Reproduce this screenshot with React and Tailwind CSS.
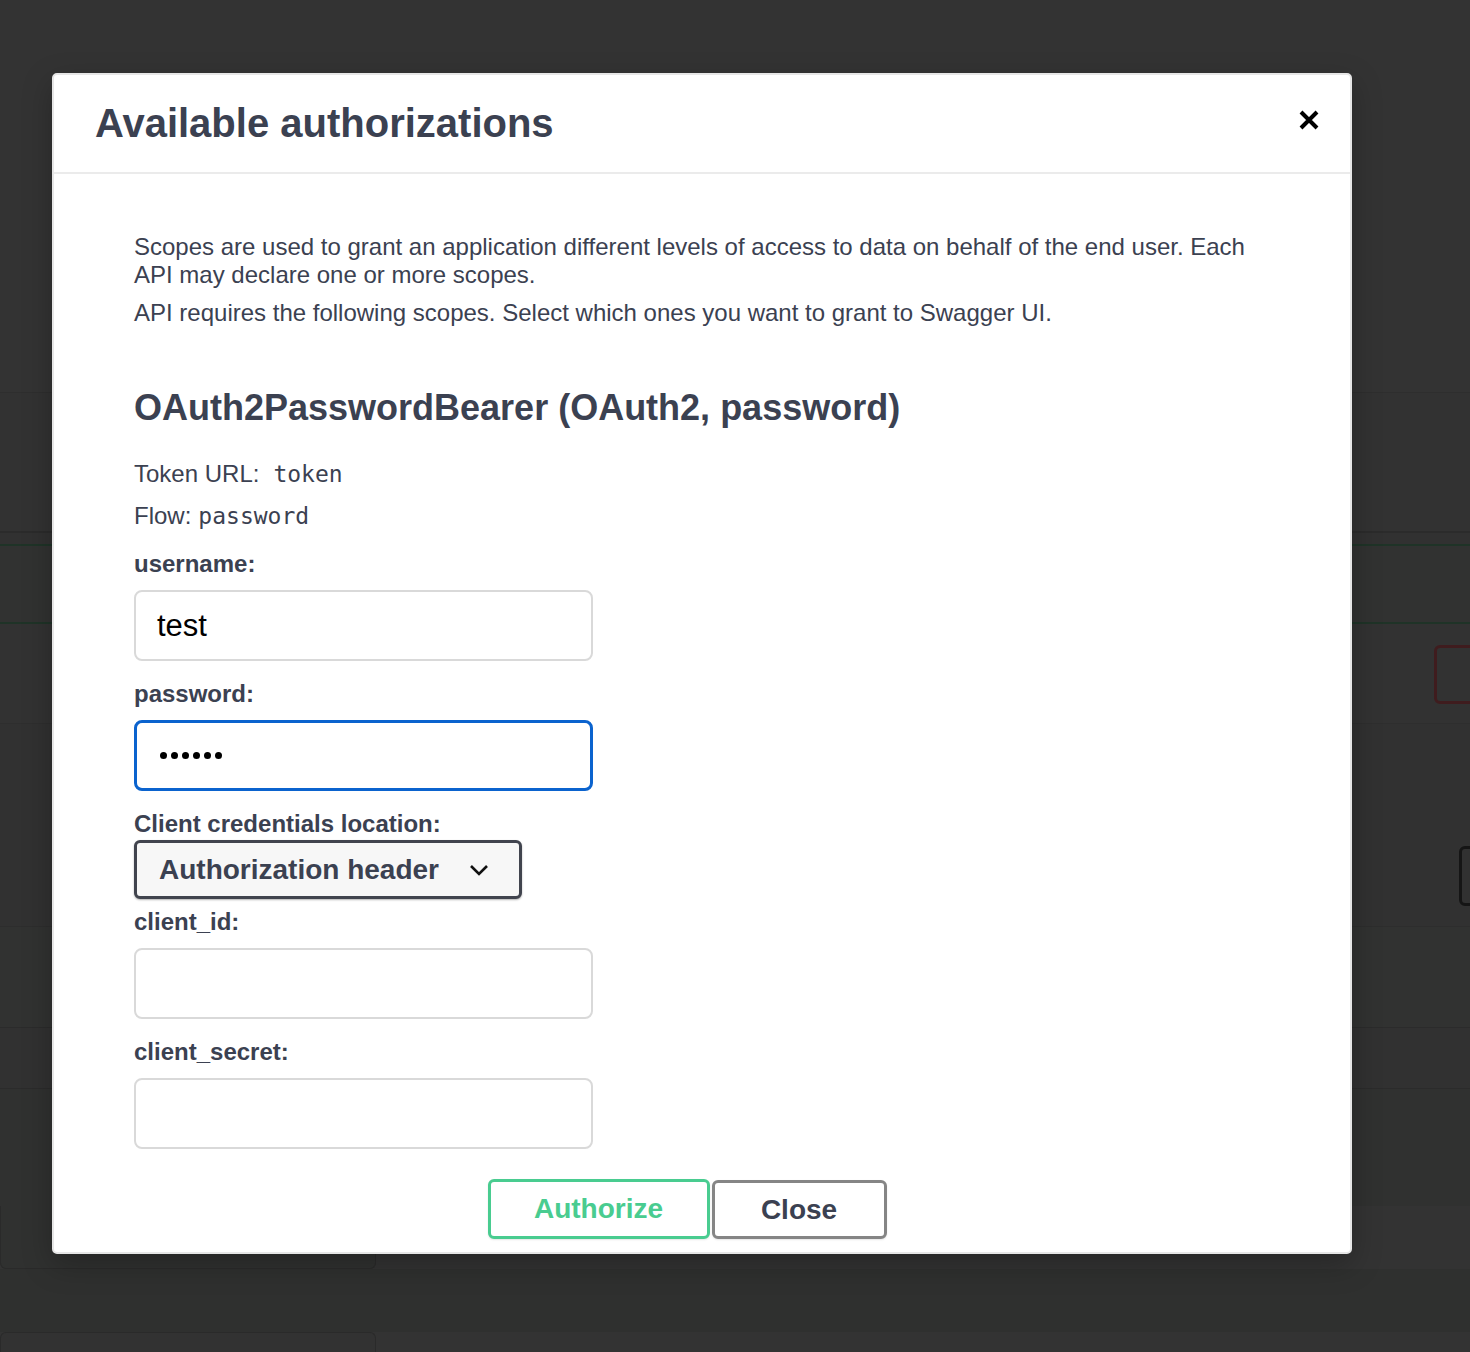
import React from "react";

function Label({ children, className = "" }) {
  return (
    <div className={"text-[24px] leading-[28px] font-bold text-[#3b4151] " + className}>
      {children}
    </div>
  );
}

function TextBox({ children, focused = false, className = "" }) {
  return (
    <div
      className={
        "w-[459px] h-[71px] rounded-[8px] bg-white flex items-center pl-[21px] " +
        (focused ? "border-[3px] border-[#0b63ce] pl-[20px] " : "border-2 border-[#d9d9d9] ") +
        className
      }
    >
      {children}
    </div>
  );
}

export default function App() {
  return (
    <div className="relative w-[1470px] h-[1352px] overflow-hidden bg-[#333333] font-['Liberation_Sans',Arial,sans-serif]">
      {/* dimmed page behind the modal */}
      <div className="flex flex-col w-full">
        <div className="h-[392px] bg-[#333333]" />
        <div className="h-[139px] border-t border-[#2e2e2e] bg-[#323232]" />
        <div className="h-[13px] border-t-2 border-[#2b2b2b] bg-[#313131]" />
        <div className="h-[78px] border-t-2 border-[#1f3327] bg-[#313231]" />
        <div className="relative h-[101px] border-t-2 border-[#1f3327] bg-[#323232]">
          <div className="absolute left-[1434px] top-[21px] w-[60px] h-[59px] rounded-[6px] border-[3px] border-[#3f1c1e]" />
        </div>
        <div className="relative h-[203px] border-t border-[#2e2e2e] bg-[#313131]">
          <div className="absolute left-[1459px] top-[122px] w-[40px] h-[60px] rounded-[6px] border-[3px] border-[#151515]" />
        </div>
        <div className="h-[101px] border-t border-[#2d2d2d] bg-[#313231]" />
        <div className="h-[61px] border-t border-[#2b2b2b] bg-[#313131]" />
        <div className="h-[118px] border-t border-[#2b2b2b] bg-[#303130]" />
        <div className="h-[63px] w-[376px] border border-t-0 border-[#2a2a2a] rounded-b-[6px] bg-[#303130]" />
        <div className="h-[63px] bg-[#2f302f]" />
        <div className="h-[40px] w-[376px] border border-b-0 border-[#2a2a2a] rounded-t-[6px] bg-[#323232]" />
      </div>

      {/* modal */}
      <div className="absolute left-[52px] top-[73px] w-[1300px] h-[1181px] bg-white rounded-[5px] border-2 border-[#e6e6e6] shadow-[0_10px_30px_rgba(0,0,0,0.25)] flex flex-col">
        <div className="h-[99px] shrink-0 border-b-2 border-[#ebebeb] flex items-center justify-between pl-[41px] pr-[30px]">
          <h3 className="text-[40px] leading-[48px] font-bold text-[#3b4151] -mt-[2px]">
            Available authorizations
          </h3>
          <svg width="22" height="22" viewBox="0 0 22 22" className="-mt-[8px]">
            <path d="M3 3 L19 19 M19 3 L3 19" stroke="#000" strokeWidth="4" strokeLinecap="butt" />
          </svg>
        </div>

        <div className="flex flex-col pl-[80px] pr-[81px] pt-[59px] text-[#3b4151]">
          <p className="text-[24px] leading-[28px]">
            Scopes are used to grant an application different levels of access to data on behalf of the end user. Each API may declare one or more scopes.
          </p>
          <p className="text-[24px] leading-[28px] mt-[10px]">
            API requires the following scopes. Select which ones you want to grant to Swagger UI.
          </p>

          <h4 className="text-[36px] leading-[43px] font-bold mt-[59px]">
            OAuth2PasswordBearer (OAuth2, password)
          </h4>

          <p className="text-[24px] leading-[28px] mt-[31px]">
            Token URL:
            <span className="ml-[14px] font-['DejaVu_Sans_Mono','Liberation_Mono',monospace] text-[23px]">token</span>
          </p>
          <p className="text-[24px] leading-[28px] mt-[14px]">
            Flow:
            <span className="ml-[7px] font-['DejaVu_Sans_Mono','Liberation_Mono',monospace] text-[23px]">password</span>
          </p>

          <Label className="mt-[20px]">username:</Label>
          <TextBox className="mt-[12px]">
            <span className="text-[31px] leading-[36px] text-black">test</span>
          </TextBox>

          <Label className="mt-[19px]">password:</Label>
          <TextBox focused className="mt-[12px] h-[70px]">
            <div className="flex items-center gap-[4px] ml-[2px]">
              {[0, 1, 2, 3, 4, 5].map((i) => (
                <span key={i} className="block w-[7px] h-[7px] rounded-full bg-black" />
              ))}
            </div>
          </TextBox>

          <Label className="mt-[19px]">Client credentials location:</Label>
          <div className="mt-[2px] w-[388px] h-[59px] rounded-[6px] border-[3px] border-[#41444e] bg-[#f7f7f7] shadow-[0_1px_2px_rgba(0,0,0,0.3)] flex items-center justify-between pl-[22px] pr-[30px]">
            <span className="text-[28px] leading-[32px] font-bold text-[#3b4151]">Authorization header</span>
            <svg width="20" height="12" viewBox="0 0 20 12">
              <path d="M2 2 L10 10 L18 2" fill="none" stroke="#111" strokeWidth="2.6" />
            </svg>
          </div>

          <Label className="mt-[9px]">client_id:</Label>
          <TextBox className="mt-[12px]" />

          <Label className="mt-[19px]">client_secret:</Label>
          <TextBox className="mt-[12px]" />

          <div className="flex justify-center mt-[30px]">
            <button className="w-[222px] h-[60px] rounded-[6px] border-[3px] border-[#49cc90] bg-white text-[28px] font-bold text-[#49cc90] shadow-[0_1px_2px_rgba(0,0,0,0.1)]">
              Authorize
            </button>
            <button className="ml-[2px] mr-[29px] w-[175px] h-[59px] mt-[1px] rounded-[6px] border-[3px] border-[#858585] bg-white text-[28px] font-bold text-[#3b4151] shadow-[0_1px_2px_rgba(0,0,0,0.1)]">
              Close
            </button>
          </div>
        </div>
      </div>
    </div>
  );
}
